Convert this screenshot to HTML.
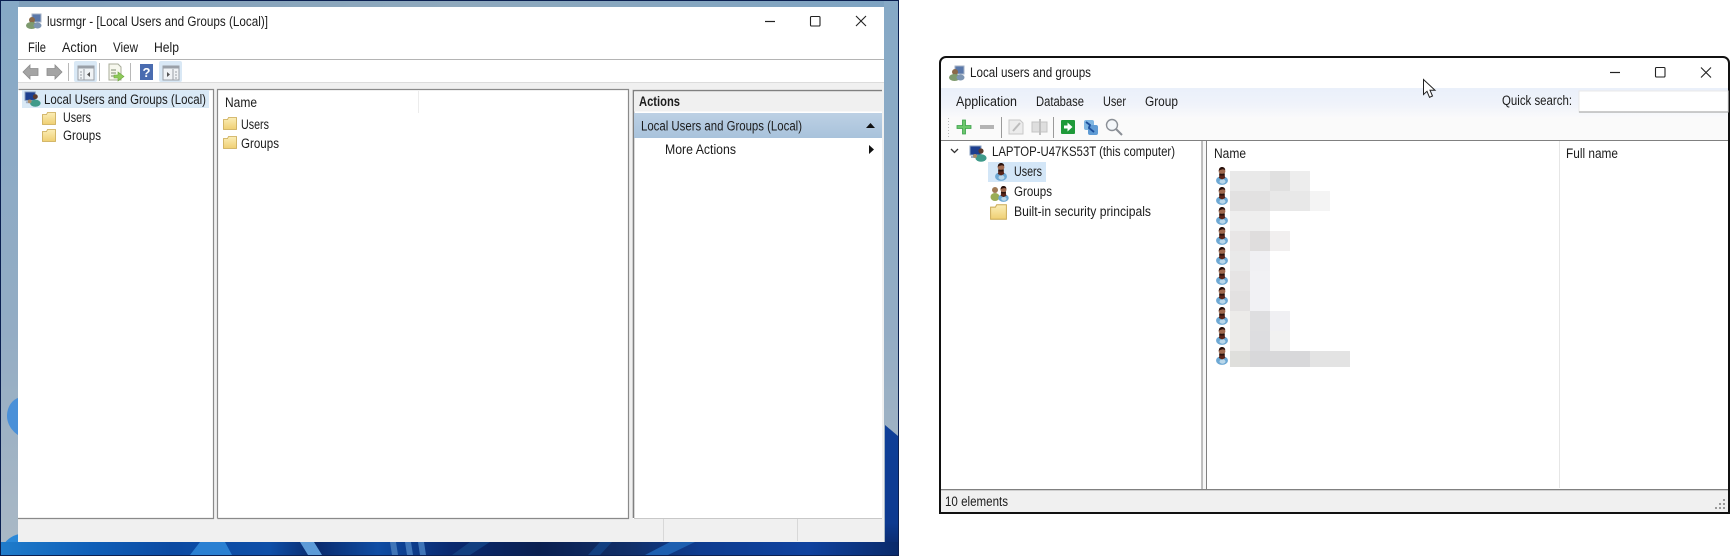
<!DOCTYPE html>
<html><head><meta charset="utf-8"><title>Local users and groups</title>
<style>
html,body{margin:0;padding:0;background:#fff;width:1731px;height:556px;overflow:hidden}
svg{display:block;filter:blur(.3px)}
text{font-family:"Liberation Sans",sans-serif;font-size:13.5px;fill:#1c1c1c}
</style></head><body>
<svg width="1731" height="556" viewBox="0 0 1731 556" xmlns="http://www.w3.org/2000/svg">
<defs>
<linearGradient id="strip" x1="0" y1="0" x2="0" y2="1"><stop offset="0" stop-color="#86a9c6"/><stop offset=".6" stop-color="#93acc4"/><stop offset="1" stop-color="#a9b8c5"/></linearGradient>
<linearGradient id="top" x1="0" y1="0" x2="1" y2="0"><stop offset="0" stop-color="#7f9fbb"/><stop offset=".5" stop-color="#8fa9bd"/><stop offset="1" stop-color="#7da3c2"/></linearGradient>
<linearGradient id="rblue" x1="0" y1="0" x2="0" y2="1"><stop offset="0" stop-color="#0f3f98"/><stop offset=".75" stop-color="#0d3a90"/><stop offset="1" stop-color="#0a2560"/></linearGradient>
<linearGradient id="bot" x1="0" y1="0" x2="1" y2="0">
<stop offset="0" stop-color="#1f7ccb"/><stop offset=".1" stop-color="#0f5fb8"/><stop offset=".19" stop-color="#0b4aa2"/><stop offset=".3" stop-color="#0e4fa8"/><stop offset=".35" stop-color="#0a2a6c"/><stop offset=".42" stop-color="#0f4da4"/><stop offset=".5" stop-color="#0a2a70"/><stop offset=".6" stop-color="#0a1f50"/><stop offset=".7" stop-color="#112f68"/><stop offset=".78" stop-color="#0e3c90"/><stop offset=".9" stop-color="#0f429f"/><stop offset="1" stop-color="#0a2a6a"/></linearGradient>
<linearGradient id="abar" x1="0" y1="0" x2="0" y2="1"><stop offset="0" stop-color="#bcd0e4"/><stop offset="1" stop-color="#a8c2db"/></linearGradient>
<linearGradient id="menu2" x1="0" y1="0" x2="0" y2="1"><stop offset="0" stop-color="#eaf0fa"/><stop offset=".55" stop-color="#f0f3fa"/><stop offset="1" stop-color="#fafafb"/></linearGradient>
<linearGradient id="fold" x1="0" y1="0" x2="0" y2="1"><stop offset="0" stop-color="#fbeeb8"/><stop offset="1" stop-color="#efcf72"/></linearGradient>
<symbol id="folder" viewBox="0 0 14 13"><path d="M.5 2.500h4l1-2h8v12H.5z" fill="url(#fold)" stroke="#c9a850" stroke-width=".8"/></symbol>
<symbol id="person" viewBox="0 0 12 18"><ellipse cx="6" cy="13.500" rx="5.900" ry="4.400" fill="#6ea9d4"/><ellipse cx="6.500" cy="14.500" rx="3" ry="2.200" fill="#b9d7ea"/><path d="M3.500 8h5l.8 3-3.300 1.500L2.800 11z" fill="#5a2418"/><circle cx="6" cy="4" r="3.400" fill="#a06a50"/><path d="M2.800 4c0-3 1.500-4 3.200-4s3.200 1 3.200 3L7 2.200 4 3zM3.400 6c1 1 4.200 1 5.200 0l.3 2.500H3z" fill="#2a120c"/></symbol>
<symbol id="comp" viewBox="0 0 18 17"><rect x="1" y="1" width="11" height="9" fill="#1d3f8f" stroke="#8aa0c0"/><rect x="2" y="11" width="10" height="2" fill="#a0b0c8"/><circle cx="12" cy="6" r="2.600" fill="#5c3a2c"/><ellipse cx="12" cy="13" rx="5.600" ry="3.800" fill="#3f9a8a"/><circle cx="6" cy="11" r="2" fill="#a98b6a"/></symbol>
</defs>

<!-- Wallpaper frame -->
<rect x="0" y="0" width="899" height="556" fill="#0a1f50"/>
<rect x="1" y="1" width="897" height="7" fill="url(#top)"/>
<rect x="1" y="1" width="18" height="541" fill="url(#strip)"/>
<rect x="884" y="1" width="14" height="541" fill="url(#strip)"/>
<polygon points="885,425 898,436 898,555 885,555" fill="url(#rblue)"/>
<path d="M18 398c-6 2-11 9-11 18 0 8 5 15 11 19z" fill="#4a90d8"/>
<path d="M1 555v-7c5-8 10-12 18-14v8z" fill="#2a88d8"/>
<rect x="1" y="542" width="897" height="13" fill="url(#bot)"/>
<polygon points="200,542 225,542 232,555 190,555" fill="#2a80d2"/>
<polygon points="300,542 314,542 322,555 308,555" fill="#5d9bd8"/>
<polygon points="390,542 396,542 398,555 392,555" fill="#3f75b8"/>
<polygon points="405,542 411,542 413,555 407,555" fill="#3f75b8"/>
<polygon points="418,542 424,542 426,555 420,555" fill="#3f75b8"/>
<polygon points="470,542 490,542 470,555 452,555" fill="#123f80"/>
<polygon points="600,542 612,542 600,555 588,555" fill="#123f80"/>
<polygon points="670,542 695,542 668,555 645,555" fill="#1d5fb0"/>

<!-- Left window -->
<rect x="18" y="7" width="866" height="535" fill="#fff"/>
<rect x="18" y="59" width="866" height="1" fill="#b4b4b4"/>
<rect x="18" y="82" width="866" height="7" fill="#f0f0f0"/>
<rect x="18" y="82" width="866" height="1" fill="#dcdcdc"/>
<rect x="18" y="519" width="866" height="23" fill="#f0f0f0"/>
<rect x="213.500" y="89" width="3.500" height="430" fill="#f0f0f0"/>
<rect x="629" y="89" width="4" height="430" fill="#f0f0f0"/>
<rect x="882" y="89" width="2" height="430" fill="#f0f0f0"/>
<path d="M18.500 89.500H213.500V518.500H18M217.500 518.500V89.500H628.500V518.500H217.500" fill="none" stroke="#8a8a8a" stroke-width="1.200"/>
<path d="M633.500 518V90.500H882" fill="none" stroke="#808080" stroke-width="1.600"/>
<rect x="634" y="518" width="248" height="1" fill="#c8c8c8"/>
<rect x="663" y="519" width="1" height="22" fill="#d8d8d8"/><rect x="797" y="519" width="1" height="22" fill="#d8d8d8"/>

<!-- title icon -->
<g transform="translate(26,13)"><rect x="6" y="1" width="9" height="8" fill="#5a78aa" stroke="#a4b2c6"/><circle cx="6" cy="7" r="3" fill="#8a6a4a"/><ellipse cx="5.500" cy="12.500" rx="5.500" ry="3.500" fill="#7e9a6e"/><ellipse cx="11.500" cy="12.500" rx="4" ry="3" fill="#7d95b2"/></g>
<text x="47" y="26" textLength="221" lengthAdjust="spacingAndGlyphs">lusrmgr - [Local Users and Groups (Local)]</text>
<path d="M765 21.500h10" stroke="#222" stroke-width="1.200"/>
<rect x="810.500" y="16.500" width="9.500" height="9.500" rx="1" fill="none" stroke="#222" stroke-width="1.100"/>
<path d="M856 16l10 10M866 16l-10 10" stroke="#222" stroke-width="1.100"/>

<text x="28" y="52" textLength="18" lengthAdjust="spacingAndGlyphs">File</text>
<text x="62" y="52" textLength="35" lengthAdjust="spacingAndGlyphs">Action</text>
<text x="113" y="52" textLength="25" lengthAdjust="spacingAndGlyphs">View</text>
<text x="154" y="52" textLength="25" lengthAdjust="spacingAndGlyphs">Help</text>

<!-- toolbar -->
<path d="M23 72l7-7v3.500h8v7h-8v3.500z" fill="#a4a4a4" stroke="#8c8c8c" stroke-width=".8"/>
<path d="M62 72l-7-7v3.500h-8v7h8v3.500z" fill="#a4a4a4" stroke="#8c8c8c" stroke-width=".8"/>
<rect x="68" y="63" width="1" height="18" fill="#b8b8b8"/>
<rect x="74" y="61" width="23" height="21" rx="2" fill="#d9e8f5"/>
<rect x="78" y="66" width="16" height="14" fill="#f0f3f6" stroke="#9a9fa6"/><rect x="78" y="66" width="16" height="2.500" fill="#9aa0a8"/><path d="M84 69v11M80 72h2M80 75h2M80 78h2" stroke="#9a9fa6"/><path d="M90 72l-3 2.500 3 2.500z" fill="#555"/>
<rect x="99" y="63" width="1" height="18" fill="#b8b8b8"/>
<path d="M109 64h9l3 3v13h-12z" fill="#f7f8ee" stroke="#a8ac9a"/><path d="M111 70h5M111 73h5M111 76h5" stroke="#7c8a70"/><path d="M114 75h4v-3l6 4.500-6 4.500v-3h-4z" fill="#8ecb5a" stroke="#6ca53f" stroke-width=".6"/>
<rect x="130" y="63" width="1" height="18" fill="#b8b8b8"/>
<rect x="140" y="64" width="13" height="16" fill="#4a6cb0"/>
<text x="146.500" y="77" text-anchor="middle" style="font-size:13px;font-weight:bold;fill:#fff">?</text>
<rect x="159" y="61" width="23" height="21" rx="2" fill="#d9e8f5"/>
<rect x="163" y="66" width="16" height="14" fill="#f0f3f6" stroke="#9a9fa6"/><rect x="163" y="66" width="16" height="2.500" fill="#9aa0a8"/><path d="M173 69v11M175 72h2M175 75h2M175 78h2" stroke="#9a9fa6"/><path d="M167 72l3 2.500-3 2.500z" fill="#555"/>

<!-- left tree -->
<rect x="22" y="90" width="187" height="18" fill="#d9e9f6"/>
<use href="#comp" x="24" y="91" width="17" height="16"/>
<text x="44" y="104" textLength="162" lengthAdjust="spacingAndGlyphs">Local Users and Groups (Local)</text>
<use href="#folder" x="42" y="112" width="14" height="13"/>
<text x="63" y="122" textLength="28" lengthAdjust="spacingAndGlyphs">Users</text>
<use href="#folder" x="42" y="129" width="14" height="13"/>
<text x="63" y="140" textLength="38" lengthAdjust="spacingAndGlyphs">Groups</text>

<!-- middle -->
<text x="225" y="107" textLength="32" lengthAdjust="spacingAndGlyphs">Name</text>
<rect x="418" y="91" width="1" height="22" fill="#ececec"/>
<use href="#folder" x="223" y="117" width="14" height="13"/>
<text x="241" y="129" textLength="28" lengthAdjust="spacingAndGlyphs">Users</text>
<use href="#folder" x="223" y="136" width="14" height="13"/>
<text x="241" y="148" textLength="38" lengthAdjust="spacingAndGlyphs">Groups</text>

<!-- actions -->
<rect x="634" y="91.500" width="248" height="20" fill="#f0f0f0"/>
<text x="639" y="106" textLength="41" lengthAdjust="spacingAndGlyphs" style="font-weight:bold">Actions</text>
<rect x="634" y="113" width="248" height="25" fill="url(#abar)"/>
<text x="641" y="130.500" textLength="161" lengthAdjust="spacingAndGlyphs">Local Users and Groups (Local)</text>
<path d="M866 128l4.500-5 4.500 5z" fill="#111"/>
<text x="665" y="154" textLength="71" lengthAdjust="spacingAndGlyphs">More Actions</text>
<path d="M869 145l5 4.500-5 4.500z" fill="#111"/>

<!-- Right window -->
<path d="M940 513V63a6 6 0 0 1 6-6h777a6 6 0 0 1 6 6v450z" fill="#fff" stroke="#111" stroke-width="2"/>
<rect x="941" y="88" width="787" height="30" fill="url(#menu2)"/>
<rect x="941" y="118" width="787" height="22" fill="#fafafa"/>
<rect x="941" y="489" width="787" height="23" fill="#f0f0f0"/>
<rect x="1202" y="140" width="4.500" height="350" fill="#f7f7f7"/>
<rect x="941" y="140" width="787" height="1" fill="#808080"/>
<rect x="1201.500" y="140" width="1" height="350" fill="#808080"/>
<rect x="1206" y="140" width="1" height="350" fill="#808080"/>
<rect x="941" y="489" width="787" height="1.300" fill="#808080"/>
<rect x="1559" y="141" width="1" height="347" fill="#e6e6e6"/>

<g transform="translate(949,65)"><rect x="6" y="1" width="9" height="8" fill="#5a78aa" stroke="#a4b2c6"/><circle cx="6" cy="7" r="3" fill="#8a6a4a"/><ellipse cx="5.500" cy="12.500" rx="5.500" ry="3.500" fill="#7e9a6e"/><ellipse cx="11.500" cy="12.500" rx="4" ry="3" fill="#7d95b2"/></g>
<text x="970" y="77" textLength="121" lengthAdjust="spacingAndGlyphs">Local users and groups</text>
<path d="M1610 72.500h10" stroke="#222" stroke-width="1.200"/>
<rect x="1655.500" y="67.500" width="9.500" height="9.500" rx="1" fill="none" stroke="#222" stroke-width="1.100"/>
<path d="M1701 67.500l10 10M1711 67.500l-10 10" stroke="#222" stroke-width="1.100"/>

<text x="956" y="106" textLength="61" lengthAdjust="spacingAndGlyphs">Application</text>
<text x="1036" y="106" textLength="48" lengthAdjust="spacingAndGlyphs">Database</text>
<text x="1103" y="106" textLength="23" lengthAdjust="spacingAndGlyphs">User</text>
<text x="1145" y="106" textLength="33" lengthAdjust="spacingAndGlyphs">Group</text>
<text x="1502" y="105" textLength="70" lengthAdjust="spacingAndGlyphs">Quick search:</text>
<rect x="1579" y="91" width="149" height="21" fill="#fff" stroke="#e8e8e8"/>
<rect x="1579" y="111.500" width="149" height="1" fill="#9a9a9a"/>

<!-- cursor -->
<path d="M1423.500 79.500v15l3.500-3.200 2.500 6 3-1.300-2.500-5.800h5z" fill="#fff" stroke="#222" stroke-width="1"/>

<!-- toolbar right -->
<path d="M948.500 118v20" stroke="#bbb" stroke-dasharray="1 2"/>
<path d="M962.500 120h3v5.500h5.500v3h-5.500v5.500h-3v-5.500h-5.500v-3h5.500z" fill="#6cc76c" stroke="#3aa04a" stroke-width=".8"/>
<rect x="980" y="125" width="14" height="4" fill="#b4b4b4"/>
<rect x="1001" y="117" width="1" height="21" fill="#9a9a9a"/>
<path d="M1009 120h11l3 3v11h-14z" fill="#ececec" stroke="#c8c8c8"/><path d="M1013 131l7-8" stroke="#bcbcbc" stroke-width="2"/>
<rect x="1032" y="122" width="15" height="10" fill="#dedede" stroke="#c4c4c4"/><rect x="1039" y="119" width="2" height="16" fill="#c0c0c0"/>
<rect x="1053" y="117" width="1" height="21" fill="#9a9a9a"/>
<rect x="1061" y="120" width="14" height="14" rx="1" fill="#1f9a3a"/><path d="M1064 125.500h3.500v-3l5 4.500-5 4.500v-3H1064z" fill="#fff"/>
<rect x="1084" y="120" width="10" height="10" rx="2" fill="#7fb6e2"/><rect x="1088" y="125" width="10" height="10" rx="2" fill="#5f9bd4"/><path d="M1086 122l4 3-1 3 5 4" fill="none" stroke="#1c4f9c" stroke-width="1.800"/>
<circle cx="1112" cy="125" r="5.500" fill="#f4f7fa" stroke="#8a8f96" stroke-width="1.400"/><path d="M1116 129l6 6" stroke="#8a8f96" stroke-width="2"/>

<!-- tree right -->
<path d="M951 149l3.500 3.500 3.500-3.500" fill="none" stroke="#333" stroke-width="1.300"/>
<use href="#comp" x="969" y="145" width="18" height="17"/>
<text x="992" y="156" textLength="183" lengthAdjust="spacingAndGlyphs">LAPTOP-U47KS53T (this computer)</text>
<rect x="988" y="162" width="58" height="20" fill="#d3e6f7"/>
<use href="#person" x="995" y="163" width="12" height="18"/>
<text x="1014" y="176" textLength="28" lengthAdjust="spacingAndGlyphs">Users</text>
<circle cx="995" cy="190" r="3" fill="#a07a55"/><ellipse cx="995" cy="197" rx="4.500" ry="4" fill="#9aad55"/>
<use href="#person" x="998" y="186" width="11" height="16"/>
<text x="1014" y="196" textLength="38" lengthAdjust="spacingAndGlyphs">Groups</text>
<use href="#folder" x="990" y="204" width="17" height="16"/>
<text x="1014" y="216" textLength="137" lengthAdjust="spacingAndGlyphs">Built-in security principals</text>

<!-- list right -->
<text x="1214" y="158" textLength="32" lengthAdjust="spacingAndGlyphs">Name</text>
<text x="1566" y="158" textLength="52" lengthAdjust="spacingAndGlyphs">Full name</text>

<g shape-rendering="crispEdges">
<rect x="1230" y="171" width="40" height="20" fill="#e9e9e9"/><rect x="1270" y="171" width="20" height="20" fill="#e0e0e0"/><rect x="1290" y="171" width="20" height="20" fill="#ededed"/>
<rect x="1230" y="191" width="40" height="20" fill="#e2e1e1"/><rect x="1270" y="191" width="40" height="20" fill="#e8e8e8"/><rect x="1310" y="191" width="20" height="20" fill="#f4f4f4"/>
<rect x="1230" y="211" width="40" height="20" fill="#eeeeee"/>
<rect x="1230" y="231" width="20" height="20" fill="#e8e6e6"/><rect x="1250" y="231" width="20" height="20" fill="#dfdddd"/><rect x="1270" y="231" width="20" height="20" fill="#f1efef"/>
<rect x="1230" y="251" width="20" height="20" fill="#e9e9e9"/><rect x="1250" y="251" width="20" height="20" fill="#f0f0f3"/>
<rect x="1230" y="271" width="20" height="20" fill="#e6e4e4"/><rect x="1250" y="271" width="20" height="20" fill="#f1f1f4"/>
<rect x="1230" y="291" width="20" height="20" fill="#e3e1e1"/><rect x="1250" y="291" width="20" height="20" fill="#f1f1f4"/>
<rect x="1230" y="311" width="20" height="20" fill="#ecebe9"/><rect x="1250" y="311" width="20" height="20" fill="#dedee0"/><rect x="1270" y="311" width="20" height="20" fill="#f0f0f3"/>
<rect x="1230" y="331" width="20" height="20" fill="#ecebe9"/><rect x="1250" y="331" width="20" height="20" fill="#dddde0"/><rect x="1270" y="331" width="20" height="20" fill="#f1f1f1"/>
<rect x="1230" y="351" width="20" height="16" fill="#dfdfdc"/><rect x="1250" y="351" width="60" height="16" fill="#d8d8da"/><rect x="1310" y="351" width="40" height="16" fill="#e3e3e3"/>
</g>
<use href="#person" x="1216" y="167" width="12" height="18"/>
<use href="#person" x="1216" y="187" width="12" height="18"/>
<use href="#person" x="1216" y="207" width="12" height="18"/>
<use href="#person" x="1216" y="227" width="12" height="18"/>
<use href="#person" x="1216" y="247" width="12" height="18"/>
<use href="#person" x="1216" y="267" width="12" height="18"/>
<use href="#person" x="1216" y="287" width="12" height="18"/>
<use href="#person" x="1216" y="307" width="12" height="18"/>
<use href="#person" x="1216" y="327" width="12" height="18"/>
<use href="#person" x="1216" y="347" width="12" height="18"/>

<text x="945" y="506" textLength="63" lengthAdjust="spacingAndGlyphs">10 elements</text>
<g fill="#9a9a9a"><rect x="1723" y="499" width="2" height="2"/><rect x="1719" y="503" width="2" height="2"/><rect x="1723" y="503" width="2" height="2"/><rect x="1715" y="507" width="2" height="2"/><rect x="1719" y="507" width="2" height="2"/><rect x="1723" y="507" width="2" height="2"/></g>
</svg>
</body></html>
